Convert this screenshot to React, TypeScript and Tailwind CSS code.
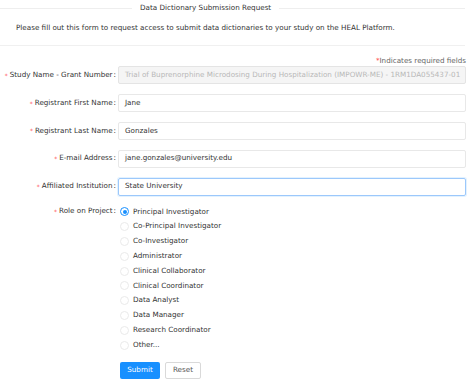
import { useState } from "react";

const roles = [
  "Principal Investigator",
  "Co-Principal Investigator",
  "Co-Investigator",
  "Administrator",
  "Clinical Collaborator",
  "Clinical Coordinator",
  "Data Analyst",
  "Data Manager",
  "Research Coordinator",
  "Other...",
];

function Label({ text }: { text: string }) {
  return (
    <div className="w-[118px] shrink-0 flex justify-end items-center pr-[2px] whitespace-nowrap">
      <span className="text-[#ff4d4f] text-[6px] mr-[2px]">*</span>
      <span className="text-[#333]">{text}</span>
      <span className="text-[#333] ml-[1px]">:</span>
    </div>
  );
}

export default function App() {
  const [role, setRole] = useState(0);

  return (
    <div className="w-[474px] h-[384px] bg-white text-[7.2px] text-[#333] font-['DejaVu_Sans',sans-serif] overflow-hidden">
      <div className="flex items-center pt-[3px] pr-[9px]">
        <div className="w-[132px] h-px bg-[#eee]" />
        <div className="px-[8px] whitespace-nowrap">Data Dictionary Submission Request</div>
        <div className="flex-1 h-px bg-[#eee]" />
      </div>
      <p className="pl-[16px] mt-[9px]">
        Please fill out this form to request access to submit data dictionaries to your study on the HEAL Platform.
      </p>
      <div className="h-px bg-[#f0f0f0] mt-[11px] mr-[9px]" />

      <div className="text-right pr-[8px] mt-[10px] text-[#666]">
        <span className="text-[#ff4d4f]">*</span>Indicates required fields
      </div>

      <div className="flex flex-col gap-[9.8px] pr-[8px]">
        <div className="flex h-[18px]">
          <Label text="Study Name - Grant Number" />
          <div className="flex-1 border border-[#e4e4e4] bg-[#f5f5f5] text-[#b8b8b8] px-[6px] flex items-center whitespace-nowrap overflow-hidden rounded-[2px]">
            Trial of Buprenorphine Microdosing During Hospitalization (IMPOWR-ME) - 1RM1DA055437-01
          </div>
        </div>
        <div className="flex h-[18px]">
          <Label text="Registrant First Name" />
          <div className="flex-1 border border-[#e8e8e8] px-[6px] flex items-center rounded-[2px]">Jane</div>
        </div>
        <div className="flex h-[18px]">
          <Label text="Registrant Last Name" />
          <div className="flex-1 border border-[#e8e8e8] px-[6px] flex items-center rounded-[2px]">Gonzales</div>
        </div>
        <div className="flex h-[18px]">
          <Label text="E-mail Address" />
          <div className="flex-1 border border-[#e8e8e8] px-[6px] flex items-center rounded-[2px]">
            jane.gonzales@university.edu
          </div>
        </div>
        <div className="flex h-[18px]">
          <Label text="Affiliated Institution" />
          <div className="flex-1 border border-[#9cc8fb] shadow-[0_0_0_1px_rgba(24,144,255,0.12)] px-[6px] flex items-center rounded-[2px]">
            State University
          </div>
        </div>
      </div>

      <div className="flex mt-[9px]">
        <div className="h-[14px] flex">
          <Label text="Role on Project" />
        </div>
        <div className="flex flex-col pl-[2px]">
          {roles.map((r, i) => (
            <button
              key={r}
              onClick={() => setRole(i)}
              className="h-[14.8px] flex items-center gap-[4px] text-left"
            >
              <span
                className={
                  i === role
                    ? "w-[9px] h-[9px] rounded-full border border-[#1890ff] flex items-center justify-center"
                    : "w-[9px] h-[9px] rounded-full border border-[#eaeaea]"
                }
              >
                {i === role && <span className="w-[4px] h-[4px] rounded-full bg-[#1890ff]" />}
              </span>
              <span>{r}</span>
            </button>
          ))}
        </div>
      </div>

      <div className="flex gap-[5px] pl-[120px] mt-[9px]">
        <button className="w-[40px] h-[17px] bg-[#1890ff] text-white rounded-[2px]">Submit</button>
        <button className="w-[36px] h-[17px] border border-[#d9d9d9] text-[#555] rounded-[2px]">Reset</button>
      </div>
    </div>
  );
}
